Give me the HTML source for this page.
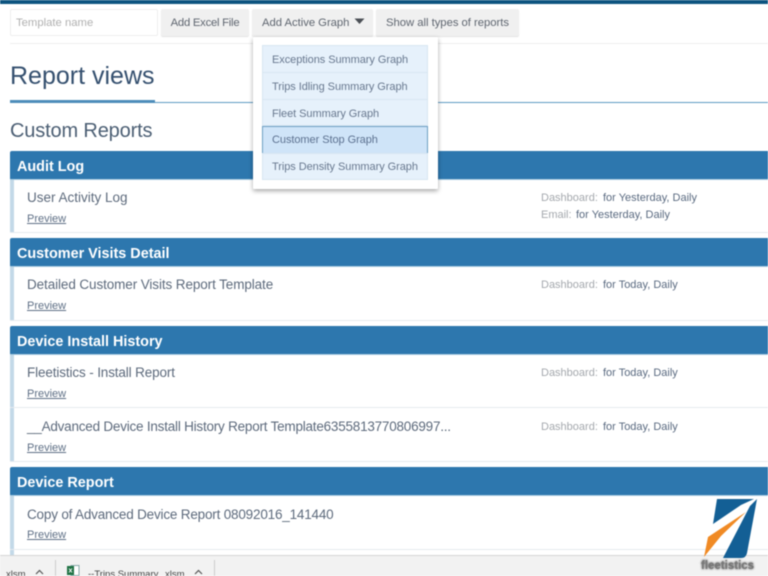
<!DOCTYPE html>
<html><head><meta charset="utf-8">
<style>
html,body{margin:0;padding:0;width:768px;height:576px;overflow:hidden;background:#fff}
#w{position:absolute;left:0;top:0;width:768px;height:576px;overflow:hidden;font-family:"Liberation Sans",sans-serif;filter:blur(.4px)}
#w div{position:absolute;white-space:nowrap}
.btn{background:#f0f0f0;top:9px;height:27px;line-height:28px;text-align:center;font-size:11.3px;color:#5f6670;border-radius:2px;box-shadow:0 1px 1px #e2e2e2;letter-spacing:-.03px}
.hd{left:10px;width:758px;height:29px;background:#2d77ae;color:#fff;font-weight:bold;font-size:14.4px;line-height:32px;border-radius:2px 0 0 0;text-indent:7px;border-bottom:1px solid #a9cbe0;box-sizing:border-box;overflow:hidden}
.bar{left:10px;width:4px;background:#c3d9e8}
.sep{left:10px;width:758px;height:1px;background:#e6ebef}
.t{left:27px;font-size:13.5px;color:#5d6a7c;line-height:18px}
.p{left:27px;font-size:11px;color:#5e6f85;text-decoration:underline;line-height:14px}
.k{font-size:11px;color:#a4a8ad;line-height:15px}
.v{font-size:11px;color:#5a6a80;line-height:15px}
.m{left:262px;width:166px;background:#e6f1fb;border:1px solid #d8e6f2;box-sizing:border-box;font-size:11px;color:#68788f;line-height:29px;text-indent:9px;letter-spacing:-.06px}
</style></head><body><div id="w">
<div style="left:0;top:0;width:768px;height:4px;background:#0d5480"></div>

<div style="left:10px;top:9px;width:148px;height:27px;box-sizing:border-box;border:1px solid #eee;border-radius:2px;font-size:11.3px;color:#b0b0b0;line-height:26px;text-indent:5px">Template name</div>
<div class="btn" style="left:161px;width:88px;letter-spacing:-.25px">Add Excel File</div>
<div class="btn" style="left:252px;width:121px;text-align:left;text-indent:10px">Add Active Graph</div>
<svg style="position:absolute;left:354px;top:18px" width="11" height="7"><path d="M0.500 0.500H10.500L5.500 6Z" fill="#4c5056"/></svg>
<div class="btn" style="left:376px;width:143px">Show all types of reports</div>
<div style="left:10px;top:43px;width:758px;height:1px;background:#eee"></div>

<div style="left:10px;top:60px;font-size:25px;line-height:32px;color:#35506f">Report views</div>
<div style="left:10px;top:102px;width:758px;height:1px;background:#5f9cc4"></div>
<div style="left:10px;top:100px;width:145px;height:3px;background:#4d8dba"></div>
<div style="left:10px;top:118px;font-size:20px;line-height:26px;color:#4c5f74;letter-spacing:-.15px">Custom Reports</div>

<div class="hd" style="top:151px">Audit Log</div>
<div class="bar" style="top:180px;height:53px"></div>
<div class="t" style="top:189px">User Activity Log</div>
<div class="p" style="top:212px">Preview</div>
<div class="k" style="left:541px;top:191px">Dashboard:</div><div class="v" style="left:603px;top:191px">for Yesterday, Daily</div>
<div class="k" style="left:541px;top:208px">Email:</div><div class="v" style="left:576px;top:208px">for Yesterday, Daily</div>
<div class="sep" style="top:232px"></div>

<div class="hd" style="top:238px">Customer Visits Detail</div>
<div class="bar" style="top:267px;height:54px"></div>
<div class="t" style="top:276px;letter-spacing:-.1px">Detailed Customer Visits Report Template</div>
<div class="p" style="top:299px">Preview</div>
<div class="k" style="left:541px;top:278px">Dashboard:</div><div class="v" style="left:603px;top:278px">for Today, Daily</div>
<div class="sep" style="top:320px"></div>

<div class="hd" style="top:326px">Device Install History</div>
<div class="bar" style="top:355px;height:107px"></div>
<div class="t" style="top:364px;letter-spacing:-.13px">Fleetistics - Install Report</div>
<div class="p" style="top:387px">Preview</div>
<div class="k" style="left:541px;top:366px">Dashboard:</div><div class="v" style="left:603px;top:366px">for Today, Daily</div>
<div class="sep" style="top:407px"></div>
<div class="t" style="top:418px;letter-spacing:-.22px">__Advanced Device Install History Report Template6355813770806997...</div>
<div class="p" style="top:441px">Preview</div>
<div class="k" style="left:541px;top:420px">Dashboard:</div><div class="v" style="left:603px;top:420px">for Today, Daily</div>
<div class="sep" style="top:461px"></div>

<div class="hd" style="top:467px">Device Report</div>
<div class="bar" style="top:496px;height:60px"></div>
<div class="t" style="top:506px;letter-spacing:-.19px">Copy of Advanced Device Report 08092016_141440</div>
<div class="p" style="top:528px">Preview</div>
<div class="sep" style="top:549px"></div>

<!-- dropdown -->
<div style="left:253px;top:37px;width:185px;height:152px;background:#fff;box-shadow:0 2px 5px rgba(0,0,0,.35);border-radius:1px"></div>
<div class="m" style="top:45px;height:28px">Exceptions Summary Graph</div>
<div class="m" style="top:72px;height:28px">Trips Idling Summary Graph</div>
<div class="m" style="top:99px;height:27px">Fleet Summary Graph</div>
<div class="m" style="top:126px;height:28px;background:#cfe4f8;border:1px solid #6d9fc3;color:#5c7190;line-height:27px">Customer Stop Graph</div>
<div class="m" style="top:153px;height:27px;line-height:27px">Trips Density Summary Graph</div>

<!-- download bar -->
<div style="left:0;top:555px;width:768px;height:21px;background:#f2f2f2;border-top:1px solid #d6d6d6;box-sizing:border-box"></div>
<div style="left:6px;top:569px;font-size:9.5px;line-height:12px;color:#444">xlsm</div>
<svg style="position:absolute;left:35px;top:569px" width="9" height="6"><path d="M1 5L4.500 1.500L8 5" fill="none" stroke="#555" stroke-width="1.2"/></svg>
<div style="left:55px;top:560px;width:1px;height:16px;background:#ccc"></div>
<div style="left:214px;top:560px;width:1px;height:16px;background:#ccc"></div>
<svg style="position:absolute;left:67px;top:565px" width="13" height="11"><rect x="4" y="0.500" width="8" height="10" fill="#fff" stroke="#8aa" stroke-width="1"/><rect x="0" y="1" width="7" height="9" fill="#1f7244"/><path d="M2 3.500L5 7.500M5 3.500L2 7.500" stroke="#fff" stroke-width=".9"/></svg>
<div style="left:88px;top:569px;font-size:9.5px;line-height:12px;color:#444">--Trips Summary</div>
<div style="left:165px;top:569px;font-size:9.5px;line-height:12px;color:#444">xlsm</div>
<svg style="position:absolute;left:194px;top:569px" width="9" height="6"><path d="M1 5L4.500 1.500L8 5" fill="none" stroke="#555" stroke-width="1.2"/></svg>

<!-- logo: coordinates are page pixels -->
<svg style="position:absolute;left:0;top:0" width="768" height="576" viewBox="0 0 768 576">
<path d="M717 499H754L741 505L713 524Z" fill="#135f95"/>
<path d="M757 499L747 553Q746 558 741 558H723L750 506Z" fill="#135f95"/>
<path d="M746 512L708 537L704 557L721 536Z" fill="#f08a24"/>
</svg>
<div style="left:701px;top:559px;font-size:11.5px;font-weight:bold;line-height:14px;color:#777;text-shadow:0 0 2px #333">fleetistics</div>
</div></body></html>
